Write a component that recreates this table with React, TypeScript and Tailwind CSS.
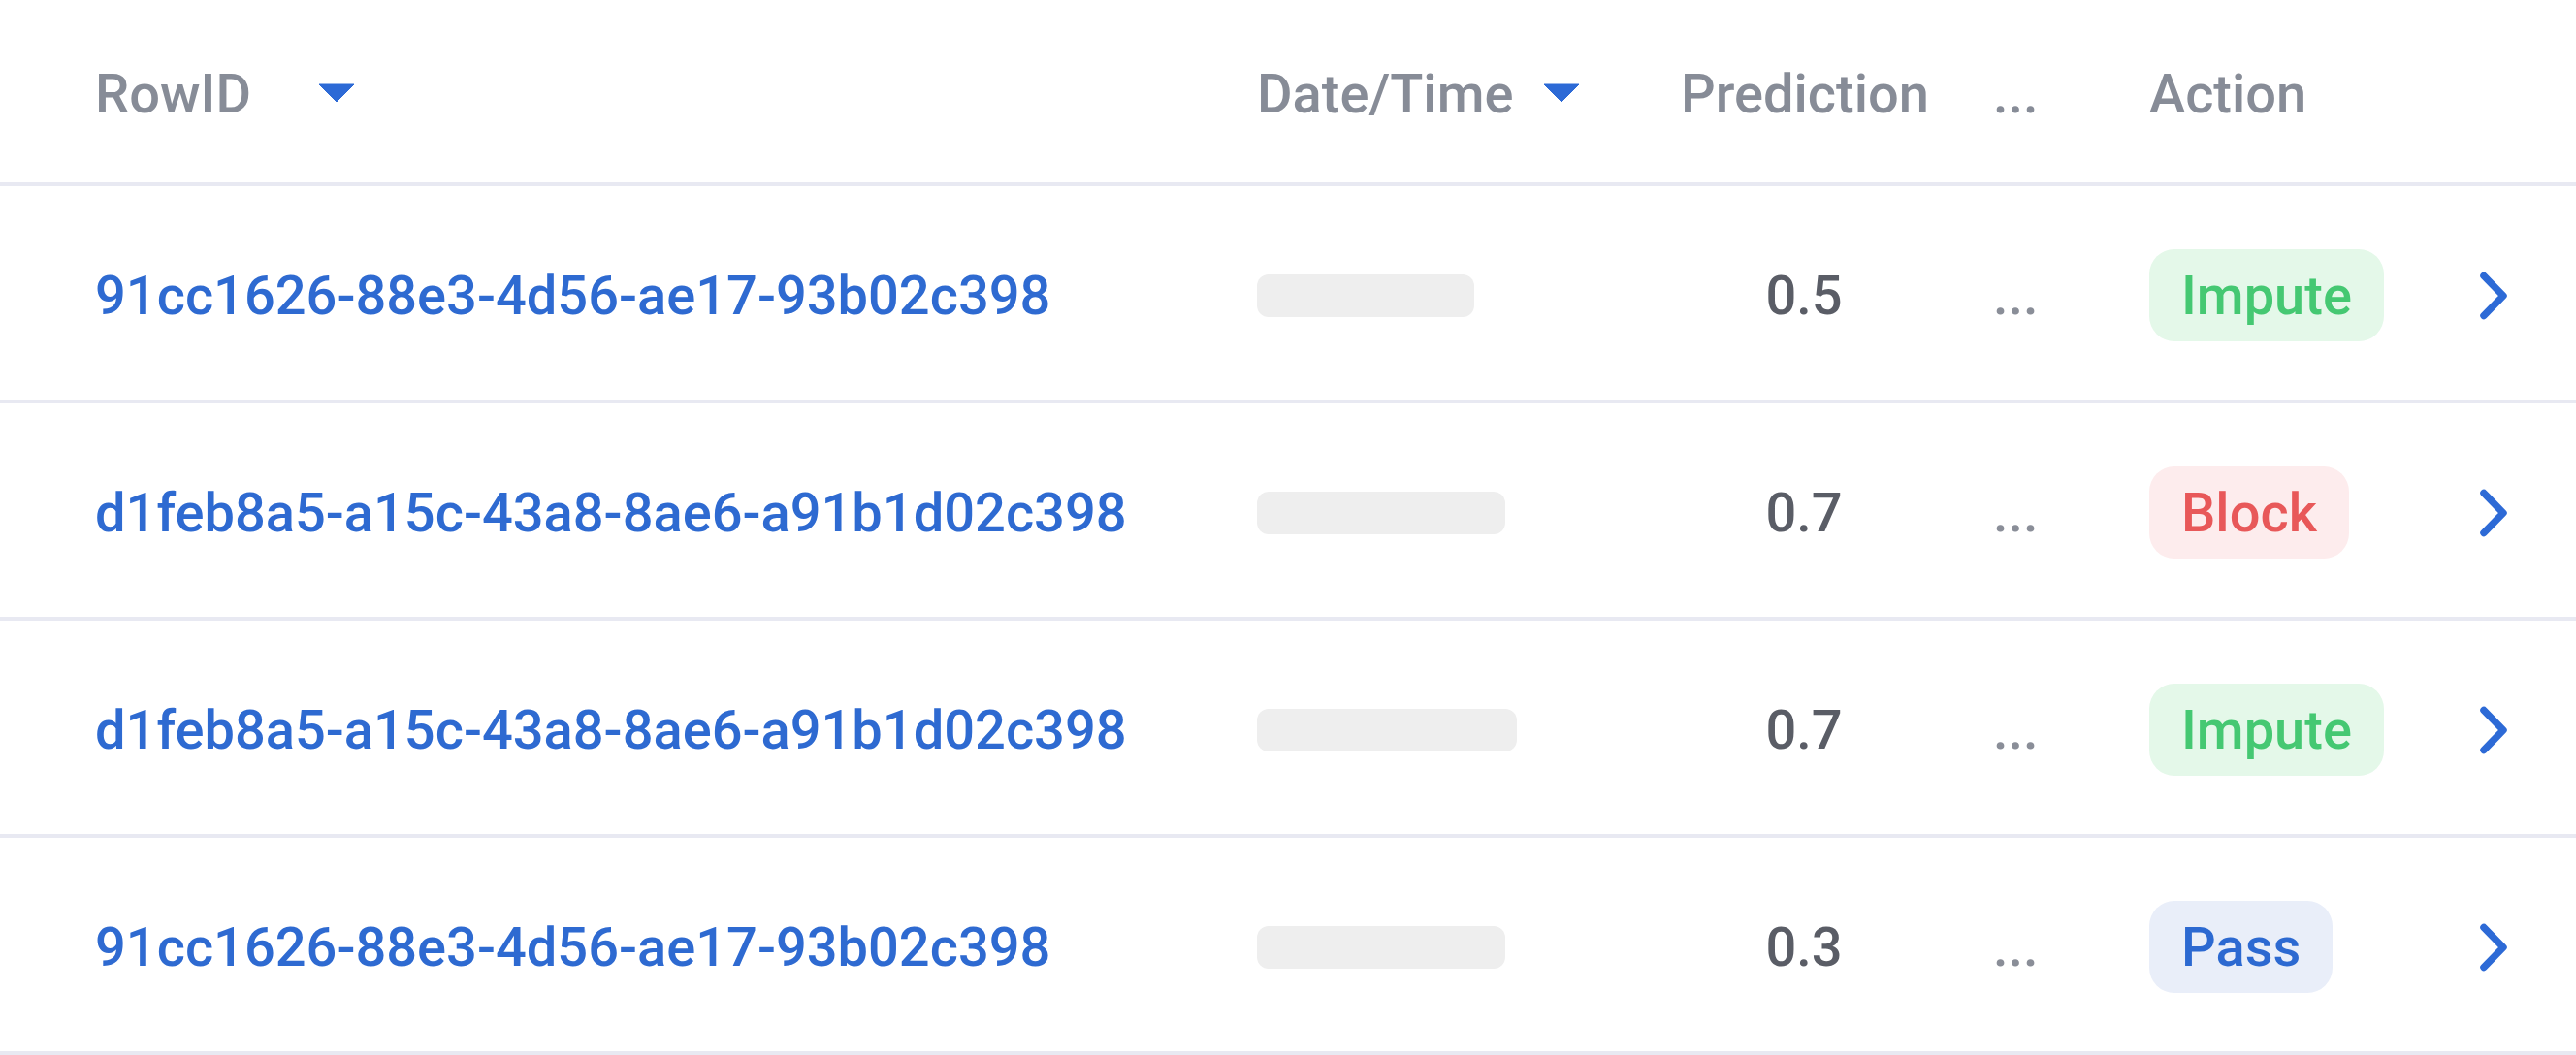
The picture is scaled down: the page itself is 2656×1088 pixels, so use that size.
import { ReactNode } from "react";

type Action = "Impute" | "Block" | "Pass";

type Row = {
  id: string;
  barWidth: string;
  prediction: string;
  action: Action;
};

const rows: Row[] = [
  { id: "91cc1626-88e3-4d56-ae17-93b02c398", barWidth: "w-[224px]", prediction: "0.5", action: "Impute" },
  { id: "d1feb8a5-a15c-43a8-8ae6-a91b1d02c398", barWidth: "w-[256px]", prediction: "0.7", action: "Block" },
  { id: "d1feb8a5-a15c-43a8-8ae6-a91b1d02c398", barWidth: "w-[268px]", prediction: "0.7", action: "Impute" },
  { id: "91cc1626-88e3-4d56-ae17-93b02c398", barWidth: "w-[256px]", prediction: "0.3", action: "Pass" },
];

const badgeStyles: Record<Action, string> = {
  Impute: "bg-[#e4f8e9] text-[#45c872]",
  Block: "bg-[#fdeced] text-[#e85859]",
  Pass: "bg-[#e9eef9] text-[#2c69d1]",
};

function SortCaret() {
  return (
    <svg width="38" height="20" viewBox="0 0 38 20" className="shrink-0">
      <path d="M1 1 H37 L19 19 Z" fill="#2d6ad6" strokeLinejoin="round" stroke="#2d6ad6" strokeWidth="1" />
    </svg>
  );
}

function Chevron() {
  return (
    <svg width="30" height="50" viewBox="0 0 30 50" fill="none" className="shrink-0">
      <polyline
        points="5,4.5 25,25 5,45.5"
        stroke="#2d6ad6"
        strokeWidth="7.5"
        strokeLinecap="round"
        strokeLinejoin="round"
      />
    </svg>
  );
}

// Shared column widths so header and body line up
function Cells({ a, b, c, d, e, f }: { a: ReactNode; b: ReactNode; c: ReactNode; d: ReactNode; e: ReactNode; f?: ReactNode }) {
  return (
    <>
      <div className="w-[1198px] shrink-0 flex items-center">{a}</div>
      <div className="w-[437px] shrink-0 flex items-center">{b}</div>
      <div className="w-[254px] shrink-0 text-center">{c}</div>
      <div className="ml-[68px] w-[161px] shrink-0">{d}</div>
      <div className="flex-1 flex items-center">{e}</div>
      <div className="w-[30px] shrink-0 flex items-center">{f}</div>
    </>
  );
}

export default function App() {
  return (
    <div className="w-[2656px] h-[1088px] bg-white overflow-hidden font-['Roboto',sans-serif] text-[56px] leading-none font-medium">
      {/* Header */}
      <div className="h-[192px] pt-[6px] border-b-[4px] border-[#e8e9f2] box-border flex items-center pl-[98px] pr-[70px] text-[#878c97]">
        <Cells
          a={
            <>
              <span>RowID</span>
              <span className="ml-[69px] mt-[-2px]"><SortCaret /></span>
            </>
          }
          b={
            <>
              <span>Date/Time</span>
              <span className="ml-[31px] mt-[-2px]"><SortCaret /></span>
            </>
          }
          c={<span>Prediction</span>}
          d={<span>...</span>}
          e={<span>Action</span>}
        />
      </div>

      {/* Body */}
      {rows.map((row, i) => (
        <div
          key={i}
          className="h-[224px] pt-[5px] border-b-[4px] border-[#e8e9f2] box-border flex items-center pl-[98px] pr-[70px]"
        >
          <Cells
            a={<span className="text-[#2e6ad1]">{row.id}</span>}
            b={<div className={`${row.barWidth} h-[44px] rounded-[12px] bg-[#eeeeee]`} />}
            c={<span className="text-[#5a5d66]">{row.prediction}</span>}
            d={<span className="text-[#8a8e98]">...</span>}
            e={
              <span className={`h-[95px] px-[33px] rounded-[26px] flex items-center ${badgeStyles[row.action]}`}>
                {row.action}
              </span>
            }
            f={<Chevron />}
          />
        </div>
      ))}
    </div>
  );
}
